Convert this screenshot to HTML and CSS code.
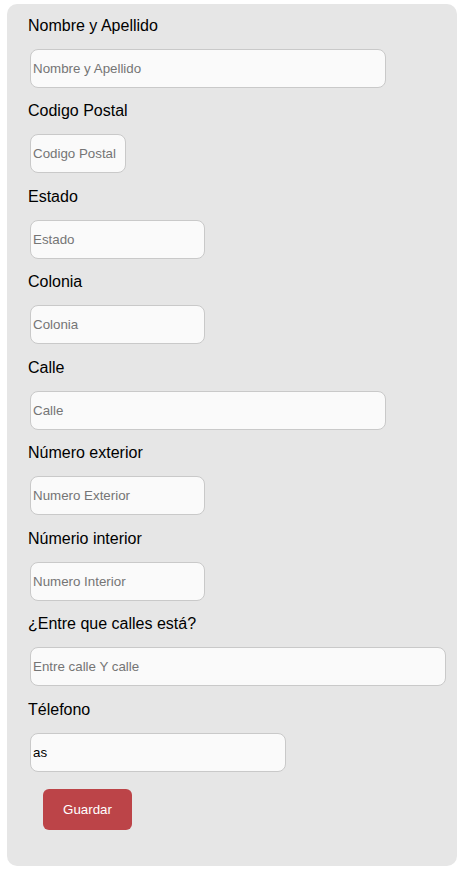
FILE: index.html
```html
<!DOCTYPE html>
<html lang="es">
<head>
<meta charset="utf-8">
<title>Dirección</title>
<link rel="stylesheet" href="styles.css">
</head>
<body>
<form class="panel">
  <label class="label">Nombre y Apellido</label>
  <input class="field w-lg" type="text" placeholder="Nombre y Apellido">
  <label class="label">Codigo Postal</label>
  <input class="field w-xs" type="text" placeholder="Codigo Postal">
  <label class="label">Estado</label>
  <input class="field w-md" type="text" placeholder="Estado">
  <label class="label">Colonia</label>
  <input class="field w-md" type="text" placeholder="Colonia">
  <label class="label">Calle</label>
  <input class="field w-lg" type="text" placeholder="Calle">
  <label class="label">Número exterior</label>
  <input class="field w-md" type="text" placeholder="Numero Exterior">
  <label class="label">Númerio interior</label>
  <input class="field w-md" type="text" placeholder="Numero Interior">
  <label class="label">¿Entre que calles está?</label>
  <input class="field w-xl" type="text" placeholder="Entre calle Y calle">
  <label class="label">Télefono</label>
  <input class="field w-ph" type="text" value="as">
  <button class="btn" type="button">Guardar</button>
</form>
</body>
</html>
```
FILE: styles.css
```css
html, body {
  margin: 0;
  padding: 0;
  background: #ffffff;
}
body {
  font-family: "Liberation Sans", Arial, sans-serif;
}
.panel {
  box-sizing: border-box;
  width: 450px;
  height: 862px;
  margin: 4px 0 0 7px;
  padding: 11px 0 0 21px;
  background: #e6e6e6;
  border-radius: 10px;
  display: flex;
  flex-direction: column;
  align-items: flex-start;
}
.label {
  display: block;
  font-size: 16px;
  line-height: 18.4px;
  color: #000;
  margin-top: 2px;
  margin-bottom: 13.4px;
}
.field {
  box-sizing: border-box;
  height: 39px;
  margin: 0 0 12.7px 2px;
  padding: 0 2px;
  border: 1px solid #c9c9c9;
  border-radius: 8px;
  background: #fafafa;
  font-family: "Liberation Sans", Arial, sans-serif;
  font-size: 13.33px;
  color: #000;
  outline: none;
}
.field::placeholder {
  color: #757575;
  opacity: 1;
}
.w-xs { width: 96px; }
.w-md { width: 175px; }
.w-ph { width: 256px; }
.w-lg { width: 356px; }
.w-xl { width: 416px; }
.btn {
  margin: 4.3px 0 0 15px;
  width: 89px;
  height: 41px;
  border: none;
  border-radius: 6px;
  background: #bc4448;
  color: #ffffff;
  font-family: "Liberation Sans", Arial, sans-serif;
  font-size: 13.33px;
  cursor: pointer;
}
```
